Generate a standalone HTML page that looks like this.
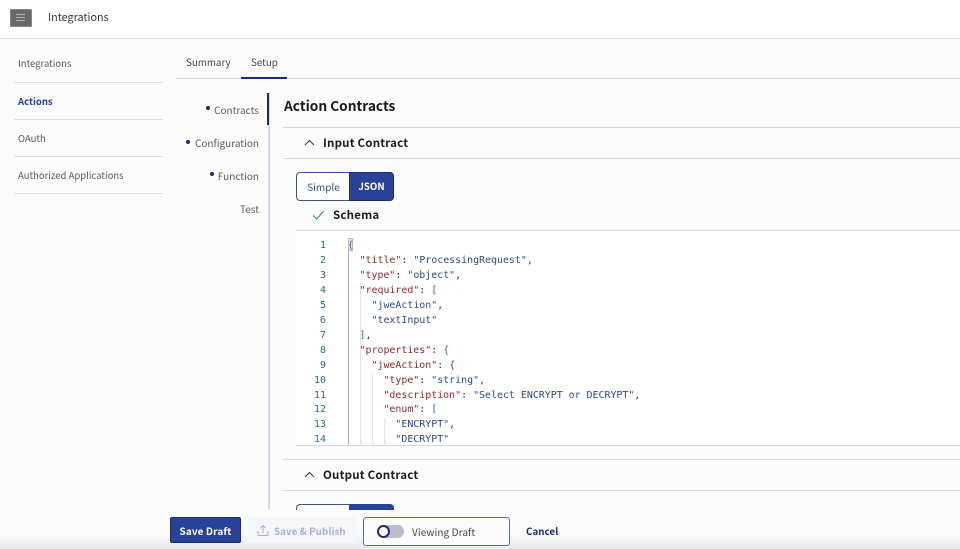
<!DOCTYPE html>
<html><head><meta charset="utf-8"><style>
html,body{margin:0;padding:0}
body{width:960px;height:549px;overflow:hidden;position:relative;background:#fcfcfd;font-family:"Noto Sans CJK JP","Liberation Sans",sans-serif;color:#555}
.a{position:absolute;white-space:nowrap}
.h{position:absolute;height:1px}
.n{font-size:9.5px;color:#5a5a5f;line-height:14px}
.tb{font-size:9.8px;color:#444;line-height:14px}
.s{font-size:10px;color:#5a5a5f;line-height:14px;text-align:right;right:701px}
.d{position:absolute;width:4px;height:4px;border-radius:50%;background:#1c2a78}
.t{font-weight:bold;font-size:11.5px;color:#1c1c1e;line-height:14px;letter-spacing:.2px}
.a pre,pre.a{white-space:pre}
pre{margin:0;font-family:"DejaVu Sans Mono","Liberation Mono",monospace;font-size:9.93px;line-height:14.95px}
.k{color:#8f2a2a}.v{color:#2c4a94}.g{color:#2d7d2d}.b{color:#2a5ad0}.p{color:#333}
</style></head><body>
<div class="a" style="left:0;top:0;width:960px;height:38px;background:#fff"></div>
<div class="h" style="left:0;top:38px;width:960px;height:1px;background:#dcdcdf"></div>
<div class="a" style="left:10px;top:9px;width:20px;height:16px;background:#69696b;border-radius:1px;border:.5px solid #888"></div>
<div class="h" style="left:16px;top:14px;width:9px;background:#b5b5b5"></div>
<div class="h" style="left:16px;top:17px;width:9px;background:#b5b5b5"></div>
<div class="h" style="left:16px;top:20px;width:9px;background:#b5b5b5"></div>
<div class="a" style="left:48px;top:10px;font-size:10.8px;line-height:15px;color:#333">Integrations</div>

<div class="a n" style="left:18px;top:56px">Integrations</div>
<div class="h" style="left:14px;top:82px;width:149px;background:#dfdfe3"></div>
<div class="a n" style="left:18px;top:94px;color:#1f3fa8;font-weight:bold">Actions</div>
<div class="h" style="left:14px;top:119px;width:149px;background:#dfdfe3"></div>
<div class="a n" style="left:18px;top:131px">OAuth</div>
<div class="h" style="left:14px;top:156px;width:149px;background:#dfdfe3"></div>
<div class="a n" style="left:18px;top:168px">Authorized Applications</div>
<div class="h" style="left:14px;top:193px;width:149px;background:#dfdfe3"></div>

<div class="a tb" style="left:186px;top:55px">Summary</div>
<div class="a tb" style="left:251px;top:55px">Setup</div>
<div class="h" style="left:176px;top:78px;width:784px;background:#d6d9e3"></div>
<div class="h" style="left:241px;top:77px;width:46px;height:2px;background:#1c2a78"></div>

<div class="a" style="left:268px;top:93px;width:2px;height:416px;background:#d3d6e4"></div>
<div class="a" style="left:267px;top:93px;width:2px;height:32px;background:#1c2a78"></div>
<div class="d" style="left:206px;top:106px"></div><div class="a s" style="top:103px">Contracts</div>
<div class="d" style="left:186px;top:140px"></div><div class="a s" style="top:136px">Configuration</div>
<div class="d" style="left:210px;top:172px"></div><div class="a s" style="top:169px">Function</div>
<div class="a s" style="top:202px">Test</div>

<div class="a" style="left:284px;top:96px;font-weight:bold;font-size:13.7px;line-height:19px;color:#1a1a1c">Action Contracts</div>
<div class="h" style="left:283px;top:127px;width:677px;background:#d6d6e2"></div>
<svg class="a" style="left:304px;top:139px" width="11" height="8" viewBox="0 0 11 8"><path d="M1 6 L5.5 1.5 L10 6" fill="none" stroke="#333" stroke-width="1"/></svg>
<div class="a t" style="left:323px;top:136px">Input Contract</div>
<div class="h" style="left:283px;top:158px;width:677px;background:#d6d6e2"></div>

<div class="a" style="left:296px;top:172px;width:53px;height:27px;border:1px solid #3d4f9f;border-right:0;border-radius:4px 0 0 4px;background:#fff;color:#3d4f9f;font-size:10px;line-height:28px;text-align:center">Simple</div>
<div class="a" style="left:349px;top:172px;width:45px;height:29px;background:#28429a;border-radius:0 4px 4px 0;color:#fff;font-weight:bold;font-size:9.7px;line-height:27px;text-align:center;box-sizing:border-box;border:1px solid #1c2a78">JSON</div>

<svg class="a" style="left:312px;top:210px" width="13" height="11" viewBox="0 0 13 11"><path d="M1 5.5 L4.5 9 L12 1" fill="none" stroke="#2f8f66" stroke-width="1.1"/></svg>
<div class="a t" style="left:333px;top:208px">Schema</div>
<div class="h" style="left:296px;top:230px;width:664px;background:#d6d6e2"></div>

<div class="a" style="left:296px;top:231px;width:664px;height:214px;background:#fff"></div>
<div class="a" style="left:348px;top:238px;width:1px;height:207px;background:#b0b0b0"></div>
<div class="a" style="left:348px;top:238px;width:5px;height:13px;background:#e8e8e8;border:.5px solid #bbb;box-sizing:border-box"></div>
<div class="a" style="left:360px;top:283px;width:1px;height:162px;background:#e2e2e2"></div>
<div class="a" style="left:372px;top:372px;width:1px;height:73px;background:#e2e2e2"></div>
<div class="a" style="left:384px;top:418px;width:1px;height:27px;background:#e2e2e2"></div>
<div class="a" style="left:296px;top:239px;width:664px;height:206px;overflow:hidden">
<pre class="a" style="left:0;top:0;width:30px;text-align:right;color:#2a6a8f">1
2
3
4
5
6
7
8
9
10
11
12
13
14</pre>
<pre class="a" style="left:51.6px;top:0"><span class="b">{</span>
  <span class="k">"title"</span><span class="p">:</span> <span class="v">"ProcessingRequest"</span><span class="p">,</span>
  <span class="k">"type"</span><span class="p">:</span> <span class="v">"object"</span><span class="p">,</span>
  <span class="k">"required"</span><span class="p">:</span> <span class="g">[</span>
    <span class="v">"jweAction"</span><span class="p">,</span>
    <span class="v">"textInput"</span>
  <span class="g">]</span><span class="p">,</span>
  <span class="k">"properties"</span><span class="p">:</span> <span class="g">{</span>
    <span class="k">"jweAction"</span><span class="p">:</span> <span class="k">{</span>
      <span class="k">"type"</span><span class="p">:</span> <span class="v">"string"</span><span class="p">,</span>
      <span class="k">"description"</span><span class="p">:</span> <span class="v">"Select ENCRYPT or DECRYPT"</span><span class="p">,</span>
      <span class="k">"enum"</span><span class="p">:</span> <span class="b">[</span>
        <span class="v">"ENCRYPT"</span><span class="p">,</span>
        <span class="v">"DECRYPT"</span></pre>
</div>
<div class="h" style="left:296px;top:445px;width:664px;background:#d6d6e2"></div>

<div class="h" style="left:283px;top:459px;width:677px;background:#d6d6e2"></div>
<svg class="a" style="left:304px;top:471px" width="11" height="8" viewBox="0 0 11 8"><path d="M1 6 L5.5 1.5 L10 6" fill="none" stroke="#333" stroke-width="1"/></svg>
<div class="a t" style="left:323px;top:468px">Output Contract</div>
<div class="h" style="left:283px;top:490px;width:677px;background:#d6d6e2"></div>

<div class="a" style="left:296px;top:504px;width:53px;height:20px;border:1px solid #3d4f9f;border-right:0;border-radius:4px 0 0 0;background:#fff"></div>
<div class="a" style="left:349px;top:504px;width:45px;height:20px;background:#28429a;border-radius:0 4px 0 0"></div>

<div class="a" style="left:0;top:510px;width:960px;height:39px;background:linear-gradient(to bottom,#fcfcfd 0,#fcfcfd 20%,#fafafb 60%,#e9e9ea 100%)"></div>
<div class="a" style="left:170px;top:517px;width:71px;height:26px;background:#28429a;border:1px solid #1c2a78;box-sizing:border-box;border-radius:2px;color:#fff;font-weight:bold;font-size:10px;line-height:26px;text-align:center;letter-spacing:.1px">Save Draft</div>
<div class="a" style="left:248px;top:517px;width:108px;height:26px;background:#f5f6fa;border-radius:3px"></div>
<svg class="a" style="left:257px;top:524px" width="12" height="13" viewBox="0 0 12 13"><path d="M1 7 V11.5 H11 V7 M6 9 V1.5 M3.5 4 L6 1.5 L8.5 4" fill="none" stroke="#a7b0cf" stroke-width="1"/></svg>
<div class="a" style="left:274px;top:524px;font-weight:bold;font-size:9.7px;line-height:14px;color:#a7b0cf;letter-spacing:.1px">Save &amp; Publish</div>
<div class="a" style="left:363px;top:517px;width:147px;height:29px;box-sizing:border-box;border:1px solid #5b6ab0;border-radius:3px;background:#fcfcfd"></div>
<div class="a" style="left:378px;top:525px;width:26px;height:13px;background:#babdcd;border-radius:7px"></div>
<div class="a" style="left:377px;top:525px;width:13px;height:13px;box-sizing:border-box;border:2px solid #1c2a78;border-radius:50%;background:#fff"></div>
<div class="a" style="left:412px;top:525px;font-size:10px;line-height:14px;color:#444;letter-spacing:.1px">Viewing Draft</div>
<div class="a" style="left:526px;top:524px;font-weight:bold;font-size:9.7px;line-height:14px;color:#1c2a78;letter-spacing:.1px">Cancel</div>
</body></html>
